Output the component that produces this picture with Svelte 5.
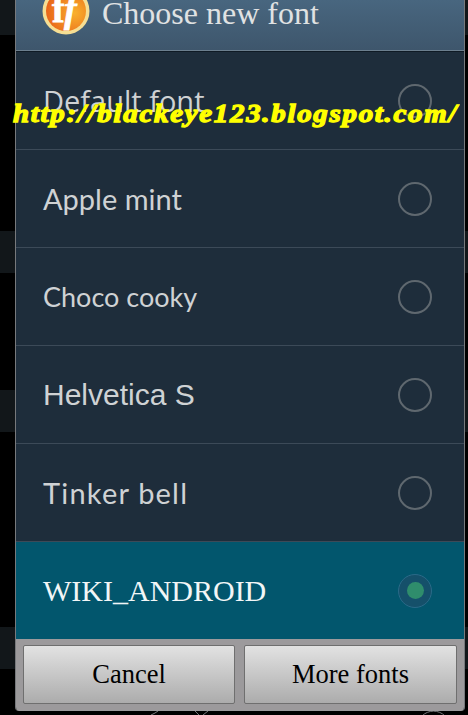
<script>
	const fonts = [
		{ name: 'Default font', cls: 'f-default' },
		{ name: 'Apple mint', cls: 'f-apple' },
		{ name: 'Choco cooky', cls: 'f-choco' },
		{ name: 'Helvetica S', cls: 'f-helv' },
		{ name: 'Tinker bell', cls: 'f-tinker' },
		{ name: 'WIKI_ANDROID', cls: 'f-wiki', selected: true }
	];
</script>

<div class="screen">
	<div class="band b1"></div>
	<div class="band b2"></div>
	<div class="band b3"></div>
	<div class="band b4"></div>

	<!-- bits of the page behind the dialog, only visible under its bottom edge -->
	<svg class="behind" width="468" height="6" viewBox="0 0 468 6">
		<path d="M151 5 L155 3 L158 1 M195 1 L199 5 M203 5 L208 1" />
		<path d="M422 6 A16 16 0 0 1 445 6" />
	</svg>

	<div class="dialog">
		<header class="title">
			<svg class="logo" width="48" height="48" viewBox="0 0 48 48">
				<defs>
					<radialGradient id="orange" cx="0.72" cy="0.55" r="0.7">
						<stop offset="0" stop-color="#f9b12c" />
						<stop offset="1" stop-color="#e9661a" />
					</radialGradient>
				</defs>
				<circle cx="24" cy="24" r="23.5" fill="#f6de93" />
				<circle cx="24" cy="24" r="20" fill="url(#orange)" />
				<text x="10" y="35" class="logo-f upright">f</text>
				<text x="22" y="35" class="logo-f">f</text>
			</svg>
			<span>Choose new font</span>
		</header>

		<ul class="list">
			{#each fonts as font}
				<li class="row" class:selected={font.selected}>
					<span class={font.cls}>{font.name}</span>
					<span class="radio"></span>
				</li>
			{/each}
		</ul>

		<footer class="actions">
			<button>Cancel</button>
			<button>More fonts</button>
		</footer>
	</div>

	<div class="watermark">http://blackeye123.blogspot.com/</div>
</div>

<style>
	:global(body) {
		margin: 0;
		background: #000;
	}
	.screen {
		position: relative;
		width: 468px;
		height: 715px;
		overflow: hidden;
		background: #000;
	}
	.band {
		position: absolute;
		left: 0;
		right: 0;
		background: #12171a;
	}
	.b1 { top: 0; height: 35px; }
	.b2 { top: 231px; height: 42px; }
	.b3 { top: 390px; height: 42px; }
	.b4 { top: 627px; height: 42px; }

	.behind {
		position: absolute;
		left: 0;
		top: 710px;
	}
	.behind path {
		fill: none;
		stroke: #77797c;
		stroke-width: 1;
	}

	.dialog {
		position: relative;
		margin-left: 15px;
		width: 450px;
		height: 711px;
		box-sizing: border-box;
		border-left: 1px solid #77797c;
		border-right: 1px solid #77797c;
		border-radius: 0 0 4px 4px;
		overflow: hidden;
		display: flex;
		flex-direction: column;
	}
	.title {
		height: 51px;
		flex: none;
		box-sizing: border-box;
		display: flex;
		align-items: flex-start;
		gap: 12px;
		padding-left: 26px;
		overflow: hidden;
		background: linear-gradient(#48667f, #3e566c);
		border-bottom: 1px solid #6c7f8e;
		color: #e0e2e3;
		font: 32px/26px "Liberation Serif", serif;
	}
	.logo {
		flex: none;
		margin-top: -13px;
	}
	.logo-f {
		fill: #fff;
		stroke: #fff;
		stroke-width: 0.8;
		font: italic bold 38px "Liberation Serif", serif;
	}
	.logo-f.upright {
		font-style: normal;
	}
	.list {
		list-style: none;
		margin: 0;
		padding: 0;
		flex: 1;
		display: flex;
		flex-direction: column;
		border-top: 1px solid #0f1a24;
		background: #02566d;
	}
	.row {
		height: 98px;
		box-sizing: border-box;
		display: flex;
		align-items: center;
		justify-content: space-between;
		padding: 0 32px 0 27px;
		background: #1e2d3b;
		border-bottom: 1px solid #3c4a58;
		color: #cfd2d4;
	}
	.radio {
		width: 34px;
		height: 34px;
		flex: none;
		box-sizing: border-box;
		border: 2px solid #5f686f;
		border-radius: 50%;
	}
	.row.selected {
		height: 97px;
		background: #02566d;
		border: 0;
		color: #f2f6f7;
	}
	.selected .radio {
		display: flex;
		align-items: center;
		justify-content: center;
		background: #15506a;
		border: 1px solid #2a6a88;
	}
	.selected .radio::after {
		content: '';
		width: 17px;
		height: 17px;
		border-radius: 50%;
		background: #2f8d6c;
	}
	.f-default { font-family: "Open Sans", sans-serif; font-size: 29px; }
	.f-apple { font-family: Lato, sans-serif; font-size: 29px; }
	.f-choco { font-family: Lato, sans-serif; font-size: 27px; }
	.f-helv { font-family: "Liberation Sans", sans-serif; font-size: 30px; }
	.f-tinker { font-family: Lato, sans-serif; font-size: 29px; letter-spacing: 1.2px; }
	.f-wiki { font-family: "Liberation Serif", serif; font-size: 30px; }

	.actions {
		height: 72px;
		flex: none;
		box-sizing: border-box;
		display: grid;
		grid-template-columns: 212px 213px;
		gap: 9px;
		padding: 6px 7px 7px 7px;
		background: #9c9a9c;
	}
	button {
		border: 1px solid #6f6f6f;
		border-radius: 2px;
		background: linear-gradient(#e2e2e2, #acacac);
		color: #000;
		font: 26.5px "Liberation Serif", serif;
		padding: 0;
	}
	.watermark {
		position: absolute;
		left: 13px;
		top: 97px;
		color: #ff0;
		font: italic 900 25px/34px "Liberation Serif", serif;
		letter-spacing: 1.5px;
		white-space: nowrap;
		-webkit-text-stroke: 1.3px #ff0;
		transform: scaleX(1.155);
		transform-origin: left center;
	}
</style>
